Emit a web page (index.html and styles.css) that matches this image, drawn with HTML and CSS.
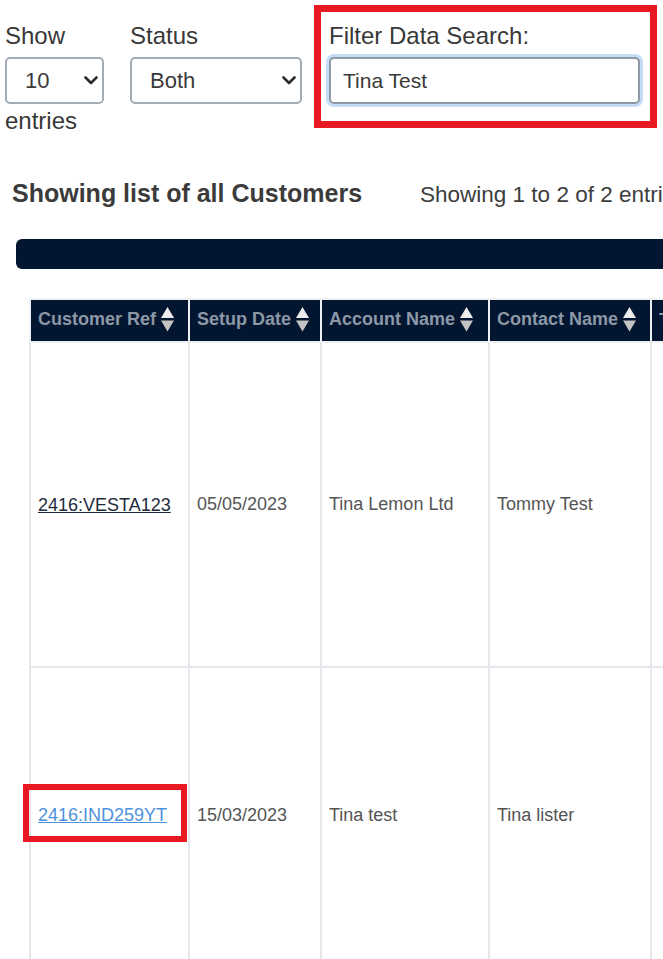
FILE: index.html
```html
<!DOCTYPE html>
<html lang="en">
<head>
<meta charset="utf-8">
<title>Customers</title>
<link rel="stylesheet" href="styles.css">
</head>
<body>
<div class="page">
  <div class="controls">
    <div class="ctl">
      <label class="lbl">Show</label>
      <div class="sel-wrap sel-len">
        <select class="sel"><option>10</option></select>
        <svg class="chev" width="14" height="9" viewBox="0 0 14 9"><path d="M1.5 1.5 L7 7 L12.5 1.5" fill="none" stroke="#2b2b2b" stroke-width="2.6" stroke-linecap="round" stroke-linejoin="round"/></svg>
      </div>
      <div class="lbl after">entries</div>
    </div>
    <div class="ctl ctl-status">
      <label class="lbl">Status</label>
      <div class="sel-wrap sel-status">
        <select class="sel"><option>Both</option></select>
        <svg class="chev" width="14" height="9" viewBox="0 0 14 9"><path d="M1.5 1.5 L7 7 L12.5 1.5" fill="none" stroke="#2b2b2b" stroke-width="2.6" stroke-linecap="round" stroke-linejoin="round"/></svg>
      </div>
    </div>
    <div class="filter">
      <label class="lbl">Filter Data Search:</label>
      <input class="search" type="text" value="Tina Test">
    </div>
  </div>

  <div class="summary">
    <h4 class="title">Showing list of all Customers</h4>
    <div class="info">Showing 1 to 2 of 2 entries</div>
  </div>

  <div class="bar"></div>

  <table class="grid">
    <colgroup>
      <col class="c1"><col class="c2"><col class="c3"><col class="c4"><col class="c5">
    </colgroup>
    <thead>
      <tr>
        <th>Customer Ref<svg class="sort" width="13" height="25" viewBox="0 0 13 25"><polygon points="6.5,0 13,11 0,11" fill="#ececec"/><polygon points="0,13.5 13,13.5 6.5,24.5" fill="#c4c4c4"/></svg></th>
        <th>Setup Date<svg class="sort" width="13" height="25" viewBox="0 0 13 25"><polygon points="6.5,0 13,11 0,11" fill="#ececec"/><polygon points="0,13.5 13,13.5 6.5,24.5" fill="#c4c4c4"/></svg></th>
        <th>Account Name<svg class="sort" width="13" height="25" viewBox="0 0 13 25"><polygon points="6.5,0 13,11 0,11" fill="#ececec"/><polygon points="0,13.5 13,13.5 6.5,24.5" fill="#c4c4c4"/></svg></th>
        <th>Contact Name<svg class="sort" width="13" height="25" viewBox="0 0 13 25"><polygon points="6.5,0 13,11 0,11" fill="#ececec"/><polygon points="0,13.5 13,13.5 6.5,24.5" fill="#c4c4c4"/></svg></th>
        <th>Telephone</th>
      </tr>
    </thead>
    <tbody>
      <tr class="r1">
        <td><a class="ref visited" href="#">2416:VESTA123</a></td>
        <td>05/05/2023</td>
        <td>Tina Lemon Ltd</td>
        <td>Tommy Test</td>
        <td></td>
      </tr>
      <tr class="r2">
        <td><a class="ref fresh marked" href="#">2416:IND259YT</a></td>
        <td>15/03/2023</td>
        <td>Tina test</td>
        <td>Tina lister</td>
        <td></td>
      </tr>
    </tbody>
  </table>
</div>
</body>
</html>
```
FILE: styles.css
```css
html, body {
  margin: 0;
  padding: 0;
  overflow: hidden;
  background: #ffffff;
}

body {
  font-family: "Liberation Sans", Arial, sans-serif;
  color: #333333;
}

.page {
  width: 663px;
  height: 959px;
  overflow: hidden;
}

/* ---------- top controls ---------- */
.controls {
  display: flex;
  align-items: flex-start;
  padding: 5px 0 0 5px;
}

.ctl {
  display: flex;
  flex-direction: column;
  padding-top: 17px;
}

.ctl-status {
  margin-left: 26px;
}

.lbl {
  display: block;
  font-size: 24px;
  line-height: 28px;
  color: #383838;
  margin-bottom: 7px;
  white-space: nowrap;
}

.lbl.after {
  margin-top: 3px;
  margin-bottom: 0;
}

.sel-wrap {
  position: relative;
  height: 47px;
}

.sel-len { width: 99px; }
.sel-status { width: 172px; }

.sel {
  appearance: none;
  -webkit-appearance: none;
  box-sizing: border-box;
  width: 100%;
  height: 100%;
  margin: 0;
  border: 2px solid #a3acb5;
  border-radius: 5px;
  background: #ffffff;
  font-family: "Liberation Sans", Arial, sans-serif;
  font-size: 22px;
  color: #3a3a3a;
  padding: 0 0 0 18px;
}

.chev {
  position: absolute;
  right: 6px;
  top: 19px;
  pointer-events: none;
}

.filter {
  margin-left: 12px;
  width: 343px;
  box-sizing: border-box;
  border: 7px solid #e81923;
  padding: 10px 10px 17px 8px;
}

.search {
  box-sizing: border-box;
  display: block;
  width: 311px;
  height: 47px;
  margin: 0;
  border: 2px solid #8e99a4;
  border-radius: 5px;
  box-shadow: 0 0 0 3px #c4dcf6;
  outline: none;
  padding: 0 0 0 12px;
  font-family: "Liberation Sans", Arial, sans-serif;
  font-size: 21px;
  color: #3a3a3a;
  background: #ffffff;
}

/* ---------- summary line ---------- */
.summary {
  display: flex;
  align-items: baseline;
  margin-top: 44px;
  padding-left: 12px;
  white-space: nowrap;
}

.title {
  margin: 0;
  font-size: 25px;
  line-height: 28px;
  font-weight: bold;
  color: #3b3b3b;
}

.info {
  margin-left: 58px;
  font-size: 22.5px;
  line-height: 28px;
  color: #3d3d3d;
}

/* ---------- dark bar ---------- */
.bar {
  margin: 30px 0 0 16px;
  width: 900px;
  height: 30px;
  background: #021631;
  border-radius: 6px;
}

/* ---------- table ---------- */
.grid {
  margin: 29px 0 0 29px;
  border-collapse: collapse;
  table-layout: fixed;
  width: 821px;
  font-size: 18px;
}

.c1 { width: 159px; }
.c2 { width: 132px; }
.c3 { width: 168px; }
.c4 { width: 162px; }
.c5 { width: 200px; }

.grid th {
  background: #021631;
  color: #8c98a6;
  font-weight: bold;
  text-align: left;
  white-space: nowrap;
  overflow: hidden;
  height: 41px;
  padding: 0 7px;
  border: 2px solid #eef1f4;
}

.sort {
  vertical-align: middle;
  margin-left: 5px;
  margin-top: -3px;
}

.grid td {
  border: 2px solid #e4e7eb;
  padding: 0 7px;
  vertical-align: middle;
  color: #555555;
  white-space: nowrap;
}

.r1 td { height: 323px; }
.r2 td { height: 294px; }

.ref {
  display: inline-block;
  line-height: 22px;
  text-decoration: underline;
}

.ref.visited { color: #1d2a3c; }
.ref.fresh { color: #4d92dc; }

.marked {
  position: relative;
}

.marked::after {
  content: "";
  position: absolute;
  left: -15px;
  top: -20px;
  width: 164px;
  height: 58px;
  box-sizing: border-box;
  border: 6px solid #e81923;
}
```
